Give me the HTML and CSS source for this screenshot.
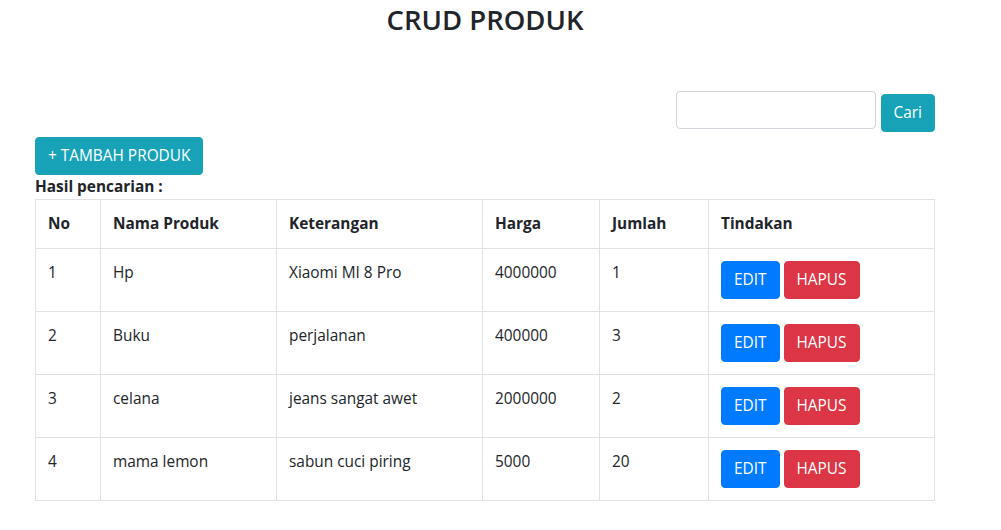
FILE: index.html
```html
<!DOCTYPE html>
<html>
<head>
<meta charset="utf-8">
<link rel="stylesheet" href="styles.css">
</head>
<body>
<div class="container">
  <h1 class="title">CRUD PRODUK</h1>
  <form class="search">
    <input class="search-input" type="text">
    <button type="button" class="btn btn-info btn-cari">Cari</button>
  </form>
  <button type="button" class="btn btn-info btn-add">+ TAMBAH PRODUK</button>
  <div class="result-label">Hasil pencarian :</div>
  <table class="table">
    <thead>
      <tr><th class="c1">No</th><th class="c2">Nama Produk</th><th class="c3">Keterangan</th><th class="c4">Harga</th><th class="c5">Jumlah</th><th>Tindakan</th></tr>
    </thead>
    <tbody>
      <tr><td>1</td><td>Hp</td><td>Xiaomi MI 8 Pro</td><td>4000000</td><td>1</td><td><span class="btn btn-primary">EDIT</span> <span class="btn btn-danger">HAPUS</span></td></tr>
      <tr><td>2</td><td>Buku</td><td>perjalanan</td><td>400000</td><td>3</td><td><span class="btn btn-primary">EDIT</span> <span class="btn btn-danger">HAPUS</span></td></tr>
      <tr><td>3</td><td>celana</td><td>jeans sangat awet</td><td>2000000</td><td>2</td><td><span class="btn btn-primary">EDIT</span> <span class="btn btn-danger">HAPUS</span></td></tr>
      <tr><td>4</td><td>mama lemon</td><td>sabun cuci piring</td><td>5000</td><td>20</td><td><span class="btn btn-primary">EDIT</span> <span class="btn btn-danger">HAPUS</span></td></tr>
    </tbody>
  </table>
</div>
</body>
</html>
```
FILE: styles.css
```css
* { box-sizing: border-box; }
body {
  margin: 0;
  font-family: "Open Sans", "Noto Sans", sans-serif;
  font-size: 15.4px;
  line-height: 24px;
  color: #212529;
  background: #fff;
}
.container {
  width: 900px;
  margin-left: 35px;
}
.title {
  margin: 0;
  padding-top: 2px;
  height: 91px;
  text-align: center;
  font-size: 27.5px;
  font-weight: 600;
  line-height: 36px;
}
.search {
  display: flex;
  justify-content: flex-end;
  align-items: flex-start;
  gap: 5px;
  height: 46px;
  margin: 0;
}
.search-input {
  width: 200px;
  height: 38px;
  border: 1px solid #ced4da;
  border-radius: 4px;
  font: inherit;
  padding: 6px 12px;
}
.btn {
  display: inline-block;
  font-family: inherit;
  font-size: 15.4px;
  line-height: 24px;
  padding: 6px 12px;
  height: 38px;
  border: 1px solid transparent;
  border-radius: 4px;
  color: #fff;
  cursor: pointer;
  vertical-align: middle;
}
.btn-cari { margin-top: 3px; }
.btn-info { background: #17a2b8; border-color: #17a2b8; }
.btn-primary { background: #007bff; border-color: #007bff; }
.btn-danger { background: #dc3545; border-color: #dc3545; }
.btn-add { display: block; }
.result-label {
  font-weight: 700;
  line-height: 24px;
}
.table {
  width: 900px;
  border-collapse: collapse;
}
.table th, .table td {
  border: 1px solid #dee2e6;
  padding: 12px;
  text-align: left;
  vertical-align: top;
}
.table th { font-weight: 700; }
.c1 { width: 65px; }
.c2 { width: 176px; }
.c3 { width: 206px; }
.c4 { width: 117px; }
.c5 { width: 109px; }
```
